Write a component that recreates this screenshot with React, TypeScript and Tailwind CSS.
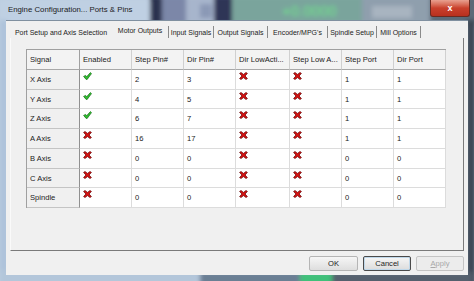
import React from "react";

const TABS = [
  { label: "Port Setup and Axis Selection", w: "w-[102px]", sep: false },
  { label: "Motor Outputs", w: "w-[57px]", sep: true, active: true },
  { label: "Input Signals", w: "w-[45px]", sep: true },
  { label: "Output Signals", w: "w-[54px]", sep: true },
  { label: "Encoder/MPG's", w: "w-[60px]", sep: true },
  { label: "Spindle Setup", w: "w-[49px]", sep: true },
  { label: "Mill Options", w: "w-[44px]", sep: true },
];

const HEADERS = ["Signal", "Enabled", "Step Pin#", "Dir Pin#", "Dir LowActi...", "Step Low A...", "Step Port", "Dir Port"];

const ROWS = [
  { name: "X Axis", on: true, step: "2", dir: "3", sp: "1", dp: "1" },
  { name: "Y Axis", on: true, step: "4", dir: "5", sp: "1", dp: "1" },
  { name: "Z Axis", on: true, step: "6", dir: "7", sp: "1", dp: "1" },
  { name: "A Axis", on: false, step: "16", dir: "17", sp: "1", dp: "1" },
  { name: "B Axis", on: false, step: "0", dir: "0", sp: "0", dp: "0" },
  { name: "C Axis", on: false, step: "0", dir: "0", sp: "0", dp: "0" },
  { name: "Spindle", on: false, step: "0", dir: "0", sp: "0", dp: "0" },
];

function Check() {
  return (
    <svg width="9" height="8" viewBox="0 0 9 8" className="block">
      <path
        d="M0.6 4.4 L2.6 3.4 L3.6 4.8 L7.4 0.6 L8.5 1.6 L4.2 7.4 L3.1 7.4 Z"
        fill="#2fbf2f"
        stroke="#1b6a1b"
        strokeWidth="0.7"
        strokeLinejoin="round"
      />
    </svg>
  );
}

function Cross() {
  return (
    <svg width="9" height="8" viewBox="0 0 9 8" className="block">
      <path
        d="M0.6 1.4 L2 0.5 L4.5 2.4 L7 0.5 L8.4 1.4 L6.1 4 L8.4 6.6 L7 7.5 L4.5 5.6 L2 7.5 L0.6 6.6 L2.9 4 Z"
        fill="#d41212"
        stroke="#5e0000"
        strokeWidth="0.7"
        strokeLinejoin="round"
      />
    </svg>
  );
}

function Cell({ children, icon }: { children?: React.ReactNode; icon?: boolean }) {
  return (
    <div
      className={`h-[19.75px] bg-white border-r border-b border-[#dcdcdc] pl-[3px] ${
        icon ? "pt-[2px]" : "flex items-center pt-[1px]"
      }`}
    >
      {children}
    </div>
  );
}

export default function App() {
  return (
    <div className="relative w-[474px] h-[281px] overflow-hidden font-['Liberation_Sans',Arial,sans-serif] text-[#222]">
      {/* aero glass behind the window */}
      <svg className="absolute inset-0" width="474" height="281" viewBox="0 0 474 281">
        <defs>
          <filter id="b" x="-20%" y="-50%" width="140%" height="200%">
            <feGaussianBlur stdDeviation="2.2" />
          </filter>
        </defs>
        <rect width="474" height="281" fill="#bccde0" />
        <g filter="url(#b)">
          <rect x="0" y="0" width="152" height="24" fill="#bfd0e3" />
          <rect x="150" y="-4" width="14" height="28" fill="#2b3350" />
          <rect x="162" y="-4" width="26" height="28" fill="#7b87a8" />
          <rect x="186" y="-4" width="30" height="28" fill="#a7b5cc" />
          <rect x="200" y="4" width="12" height="14" fill="#8b99b6" />
          <rect x="214" y="-4" width="20" height="28" fill="#2e3656" />
          <rect x="232" y="-4" width="132" height="28" fill="#7aa49c" />
          <rect x="362" y="-4" width="70" height="28" fill="#8f9fad" />
          <rect x="372" y="6" width="40" height="12" fill="#a8b4c0" />
          <rect x="430" y="-4" width="50" height="28" fill="#5c6a78" />
          <rect x="466" y="20" width="10" height="265" fill="#3d4754" />
          <rect x="0" y="20" width="8" height="265" fill="#aec3da" />
          <rect x="0" y="270" width="200" height="14" fill="#b3c6da" />
          <rect x="200" y="272" width="100" height="14" fill="#6b7f94" />
          <rect x="300" y="272" width="32" height="14" fill="#41c07a" />
          <rect x="332" y="272" width="140" height="14" fill="#55606e" />
          <text x="282" y="16" fontSize="15" fontFamily="Liberation Sans, sans-serif" fill="#6ee08a">
            +0.0000
          </text>
        </g>
      </svg>

      <div className="relative flex flex-col h-full">
        {/* title bar */}
        <div className="h-[20px] flex items-start">
          <div className="pl-[8px] pt-[5px] text-[7.8px] leading-[10px] text-[#1b1b1b]">
            Engine Configuration... Ports &amp; Pins
          </div>
          <div className="ml-auto mr-[4px] w-[40px] h-[17px] rounded-b-[3px] border border-[#6b2a20] border-t-0 bg-gradient-to-b from-[#e8a090] via-[#c9402c] to-[#b8301e] flex items-center justify-center text-white text-[9px] font-bold leading-none">
            x
          </div>
        </div>

        {/* client area */}
        <div className="mx-[6px] h-[255px] bg-[#f0f0f0] border-t border-[#8090a0] flex flex-col">
          {/* tab strip */}
          <div className="h-[17px] pl-[4px] flex items-end">
            {TABS.map((t) => (
              <div
                key={t.label}
                className={`${t.w} h-[12px] flex items-center justify-center text-[7px] leading-none whitespace-nowrap ${
                  t.sep ? "border-r border-[#8a8a8a]" : ""
                } ${t.active ? "pb-[3px]" : ""}`}
              >
                {t.label}
              </div>
            ))}
          </div>

          {/* tab page */}
          <div className="mx-[4px] h-[213px] border-r border-b border-[#7a7a7a] border-l border-l-[#fafafa] pl-[15px] pt-[11px]">
            <div className="w-[420px] border-t border-l border-[#a0a0a0] text-[7.6px] leading-none">
              <div className="grid grid-cols-[53px_52px_52px_52px_54px_52px_52px_52px]">
                {HEADERS.map((h, i) => (
                  <div
                    key={h}
                    className={`h-[19.75px] flex items-center pl-[3px] bg-[#f3f3f3] border-b border-[#a8a8a8] border-r ${
                      i === 0 ? "border-r-[#a0a0a0]" : "border-r-[#d0d0d0]"
                    }`}
                  >
                    {h}
                  </div>
                ))}
                {ROWS.map((r) => (
                  <React.Fragment key={r.name}>
                    <div className="h-[19.75px] flex items-center pl-[3px] pt-[1px] bg-[#f0f0f0] border-b border-[#c4c4c4] border-r border-r-[#909090]">
                      {r.name}
                    </div>
                    <Cell icon>{r.on ? <Check /> : <Cross />}</Cell>
                    <Cell>{r.step}</Cell>
                    <Cell>{r.dir}</Cell>
                    <Cell icon>
                      <Cross />
                    </Cell>
                    <Cell icon>
                      <Cross />
                    </Cell>
                    <Cell>{r.sp}</Cell>
                    <Cell>{r.dp}</Cell>
                  </React.Fragment>
                ))}
              </div>
            </div>
          </div>

          {/* buttons */}
          <div className="flex justify-end gap-[5px] pr-[4px] pt-[5px] text-[7.6px]">
            <button className="w-[49px] h-[15px] border border-[#b5b5b5] rounded-[2px] bg-gradient-to-b from-[#f6f6f6] to-[#dedede] leading-none">
              OK
            </button>
            <button className="w-[48px] h-[15px] border border-[#4a4a4a] rounded-[2px] bg-gradient-to-b from-[#f6f6f6] to-[#dcdcdc] leading-none shadow-[inset_0_0_0_1px_#c0d8ea]">
              Cancel
            </button>
            <button className="w-[48px] h-[15px] border border-[#c4c4c4] rounded-[2px] bg-[#ececec] text-[#a8a8a8] leading-none">
              <span className="underline">A</span>pply
            </button>
          </div>
        </div>
      </div>
    </div>
  );
}
